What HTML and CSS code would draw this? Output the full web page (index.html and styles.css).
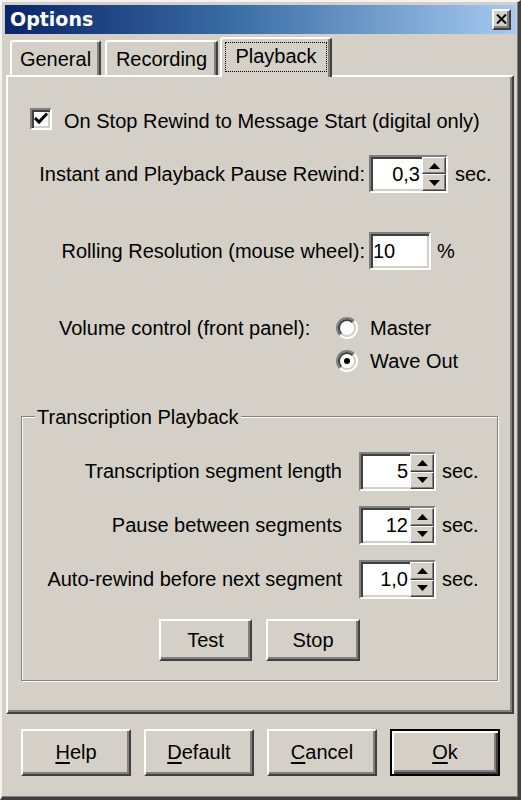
FILE: index.html
```html
<!DOCTYPE html>
<html>
<head>
<meta charset="utf-8">
<title>Options</title>
<link rel="stylesheet" href="styles.css">
</head>
<body>
<div class="window">
  <div class="titlebar">
    <span class="title">Options</span>
    <span class="close raised">
      <svg width="11" height="10" viewBox="0 0 11 10"><path d="M1 0.5 L10 9.5 M10 0.5 L1 9.5" stroke="#000" stroke-width="2"/></svg>
    </span>
  </div>
  <div class="tabs">
    <div class="tab tab-general">General</div>
    <div class="tab tab-recording">Recording</div>
    <div class="tab tab-active"><span class="focus">Playback</span></div>
  </div>
  <div class="panel">
    <div class="check-row">
      <span class="checkbox sunken">
        <svg width="18" height="18" viewBox="0 0 18 18"><polyline points="3,8 7,12 15,3.5" fill="none" stroke="#000" stroke-width="3"/></svg>
      </span>
      <span class="check-label">On Stop Rewind to Message Start (digital only)</span>
    </div>
    <div class="field-row row-instant">
      <span class="label">Instant and Playback Pause Rewind:</span>
      <span class="spin sunken spin-wide">
        <span class="spin-val">0,3</span>
        <span class="spin-btns">
          <span class="spin-btn"><svg width="11" height="6" viewBox="0 0 11 6"><polygon points="5.5,0 11,6 0,6" fill="#000"/></svg></span>
          <span class="spin-btn"><svg width="11" height="6" viewBox="0 0 11 6"><polygon points="0,0 11,0 5.5,6" fill="#000"/></svg></span>
        </span>
      </span>
      <span class="unit">sec.</span>
    </div>
    <div class="field-row row-rolling">
      <span class="label">Rolling Resolution (mouse wheel):</span>
      <span class="textbox sunken">10</span>
      <span class="unit unit-pct">%</span>
    </div>
    <div class="volume-row">
      <span class="volume-label">Volume control (front panel):</span>
      <div class="radios">
        <div class="radio-item">
          <span class="radio"><span class="radio-inner"></span></span>
          <span class="radio-label">Master</span>
        </div>
        <div class="radio-item">
          <span class="radio"><span class="radio-inner"><span class="dot"></span></span></span>
          <span class="radio-label">Wave Out</span>
        </div>
      </div>
    </div>
    <div class="group">
      <div class="legend">Transcription Playback</div>
      <div class="grow grow-first">
        <span class="glabel">Transcription segment length</span>
        <span class="spin sunken spin-narrow">
          <span class="spin-val">5</span>
          <span class="spin-btns">
            <span class="spin-btn"><svg width="11" height="6" viewBox="0 0 11 6"><polygon points="5.5,0 11,6 0,6" fill="#000"/></svg></span>
            <span class="spin-btn"><svg width="11" height="6" viewBox="0 0 11 6"><polygon points="0,0 11,0 5.5,6" fill="#000"/></svg></span>
          </span>
        </span>
        <span class="gunit">sec.</span>
      </div>
      <div class="grow">
        <span class="glabel">Pause between segments</span>
        <span class="spin sunken spin-narrow">
          <span class="spin-val">12</span>
          <span class="spin-btns">
            <span class="spin-btn"><svg width="11" height="6" viewBox="0 0 11 6"><polygon points="5.5,0 11,6 0,6" fill="#000"/></svg></span>
            <span class="spin-btn"><svg width="11" height="6" viewBox="0 0 11 6"><polygon points="0,0 11,0 5.5,6" fill="#000"/></svg></span>
          </span>
        </span>
        <span class="gunit">sec.</span>
      </div>
      <div class="grow">
        <span class="glabel">Auto-rewind before next segment</span>
        <span class="spin sunken spin-narrow">
          <span class="spin-val">1,0</span>
          <span class="spin-btns">
            <span class="spin-btn"><svg width="11" height="6" viewBox="0 0 11 6"><polygon points="5.5,0 11,6 0,6" fill="#000"/></svg></span>
            <span class="spin-btn"><svg width="11" height="6" viewBox="0 0 11 6"><polygon points="0,0 11,0 5.5,6" fill="#000"/></svg></span>
          </span>
        </span>
        <span class="gunit">sec.</span>
      </div>
      <div class="group-buttons">
        <span class="btn raised btn-test">Test</span>
        <span class="btn raised btn-stop">Stop</span>
      </div>
    </div>
  </div>
  <div class="footer">
    <span class="btn raised fbtn"><u>H</u>elp</span>
    <span class="btn raised fbtn"><u>D</u>efault</span>
    <span class="btn raised fbtn"><u>C</u>ancel</span>
    <span class="btn fbtn btn-default"><u>O</u>k</span>
  </div>
</div>
</body>
</html>
```
FILE: styles.css
```css
* { box-sizing: border-box; }
html, body { margin: 0; padding: 0; }
body {
  width: 521px;
  height: 800px;
  background: #d4d0c8;
  font-family: "Liberation Sans", Arial, sans-serif;
  font-size: 20px;
  line-height: 23px;
  color: #000;
  overflow: hidden;
}
.window {
  width: 521px;
  height: 800px;
  background: #d4d0c8;
  border-style: solid;
  border-width: 2px 3px 3px 2px;
  border-color: #f4f3f0 #404040 #404040 #f4f3f0;
  box-shadow: inset -1px -1px #808080;
  padding: 3px 2px 2px 3px;
  display: flex;
  flex-direction: column;
}
.raised {
  background: #d4d0c8;
  border-style: solid;
  border-width: 2px;
  border-color: #fff #404040 #404040 #fff;
  box-shadow: inset -2px -2px #808080;
}
.sunken {
  background: #fff;
  border-style: solid;
  border-width: 2px;
  border-color: #808080 #fff #fff #808080;
  box-shadow: inset 2px 2px #404040, inset -2px -2px #d4d0c8;
}
.titlebar {
  height: 29px;
  flex: none;
  background: linear-gradient(to right, #0a246a 0%, #3a6ea5 45%, #a6caf0 100%);
  display: flex;
  align-items: center;
  justify-content: space-between;
  padding: 0 5px;
}
.title {
  color: #fff;
  font-family: "DejaVu Sans", Verdana, sans-serif;
  font-weight: bold;
  font-size: 19px;
  line-height: 29px;
}
.close {
  width: 19px;
  height: 21px;
  display: flex;
  align-items: center;
  justify-content: center;
  padding-bottom: 1px;
}
.close svg { display: block; }
.tabs {
  flex: none;
  height: 38px;
  margin-top: 3px;
  padding-left: 5px;
  display: flex;
  align-items: flex-end;
}
.tab {
  height: 35px;
  background: #d4d0c8;
  border-top: 2px solid #fff;
  border-left: 2px solid #fff;
  border-right: 2px solid #404040;
  box-shadow: inset -2px 0 #808080;
  border-radius: 3px 3px 0 0;
  display: flex;
  align-items: center;
  justify-content: center;
  padding-top: 1px;
}
.tab-general { width: 91px; }
.tab-recording { width: 113px; margin-left: 4px; }
.tab-active {
  width: 112px;
  height: 40px;
  margin-left: 2px;
  margin-bottom: -2px;
  position: relative;
  z-index: 1;
  padding-top: 0;
  padding-bottom: 3px;
}
.focus {
  border: 1px dotted #000;
  padding: 2px 9px 3px;
}
.panel {
  flex: none;
  height: 639px;
  margin: 0 2px 0 1px;
  border-style: solid;
  border-width: 2px;
  border-color: #fff #404040 #404040 #fff;
  box-shadow: inset -2px -2px #808080;
  padding-top: 31px;
  display: flex;
  flex-direction: column;
}
.check-row {
  display: flex;
  align-items: center;
  height: 22px;
  margin-left: 22px;
}
.checkbox {
  width: 22px;
  height: 22px;
  display: block;
}
.checkbox svg { display: block; }
.check-label { margin-left: 12px; padding-top: 4px; }
.field-row {
  display: flex;
  align-items: center;
  height: 38px;
}
.row-instant { margin-top: 25px; }
.row-rolling { margin-top: 39px; }
.label {
  width: 357px;
  text-align: right;
  white-space: nowrap;
}
.spin {
  display: flex;
  height: 38px;
  margin-left: 4px;
}
.spin-wide { width: 79px; }
.spin-val {
  flex: 1;
  text-align: right;
  padding-right: 2px;
  align-self: center;
}
.spin-btns {
  width: 24px;
  display: flex;
  flex-direction: column;
}
.spin-btn {
  flex: 1;
  background: #d4d0c8;
  border-style: solid;
  border-width: 1px;
  border-color: #fff #404040 #404040 #fff;
  box-shadow: inset -1px -1px #808080;
  display: flex;
  align-items: center;
  justify-content: center;
}
.spin-btn svg { display: block; }
.unit { margin-left: 7px; }
.textbox {
  width: 62px;
  height: 38px;
  margin-left: 4px;
  padding-left: 2px;
  display: flex;
  align-items: center;
}
.unit-pct { margin-left: 6px; }
.volume-row {
  display: flex;
  align-items: flex-start;
  margin-top: 47px;
}
.volume-label {
  width: 328px;
  padding-left: 51px;
  line-height: 22px;
  white-space: nowrap;
}
.radios {
  display: flex;
  flex-direction: column;
  gap: 11px;
}
.radio-item {
  display: flex;
  align-items: center;
  height: 22px;
}
.radio {
  width: 22px;
  height: 22px;
  border-radius: 50%;
  border: 2px solid;
  border-color: #808080 #fff #fff #808080;
  display: block;
}
.radio-inner {
  display: flex;
  align-items: center;
  justify-content: center;
  width: 18px;
  height: 18px;
  border-radius: 50%;
  border: 2px solid;
  border-color: #404040 #d4d0c8 #d4d0c8 #404040;
  background: #fff;
}
.dot {
  width: 6px;
  height: 6px;
  border-radius: 50%;
  background: #000;
  display: block;
}
.radio-label { margin-left: 12px; }
.group {
  margin: 44px 14px 0 13px;
  border: 1px solid #808080;
  box-shadow: inset 1px 1px #fff, 1px 1px #fff;
  padding-bottom: 19px;
}
.legend {
  width: max-content;
  margin: -11px 0 0 13px;
  padding: 0 2px;
  background: #d4d0c8;
}
.grow {
  display: flex;
  align-items: center;
  height: 39px;
  margin-top: 15px;
}
.grow-first { margin-top: 23px; }
.glabel {
  width: 320px;
  text-align: right;
  white-space: nowrap;
}
.spin-narrow {
  width: 77px;
  height: 39px;
  margin-left: 17px;
}
.gunit { margin-left: 6px; }
.group-buttons {
  display: flex;
  justify-content: center;
  gap: 14px;
  margin-top: 20px;
}
.btn {
  display: flex;
  align-items: center;
  justify-content: center;
}
.btn-test { width: 93px; height: 42px; }
.btn-stop { width: 94px; height: 42px; }
.footer {
  flex: none;
  display: flex;
  gap: 13px;
  margin-top: 15px;
  padding-left: 16px;
}
.fbtn { width: 110px; height: 47px; }
.btn-default {
  background: #d4d0c8;
  border: 2px solid #000;
  box-shadow: inset 2px 2px #fff, inset -2px -2px #404040, inset -4px -4px #808080;
}
u { text-decoration-thickness: 2px; text-underline-offset: 3px; }
```
